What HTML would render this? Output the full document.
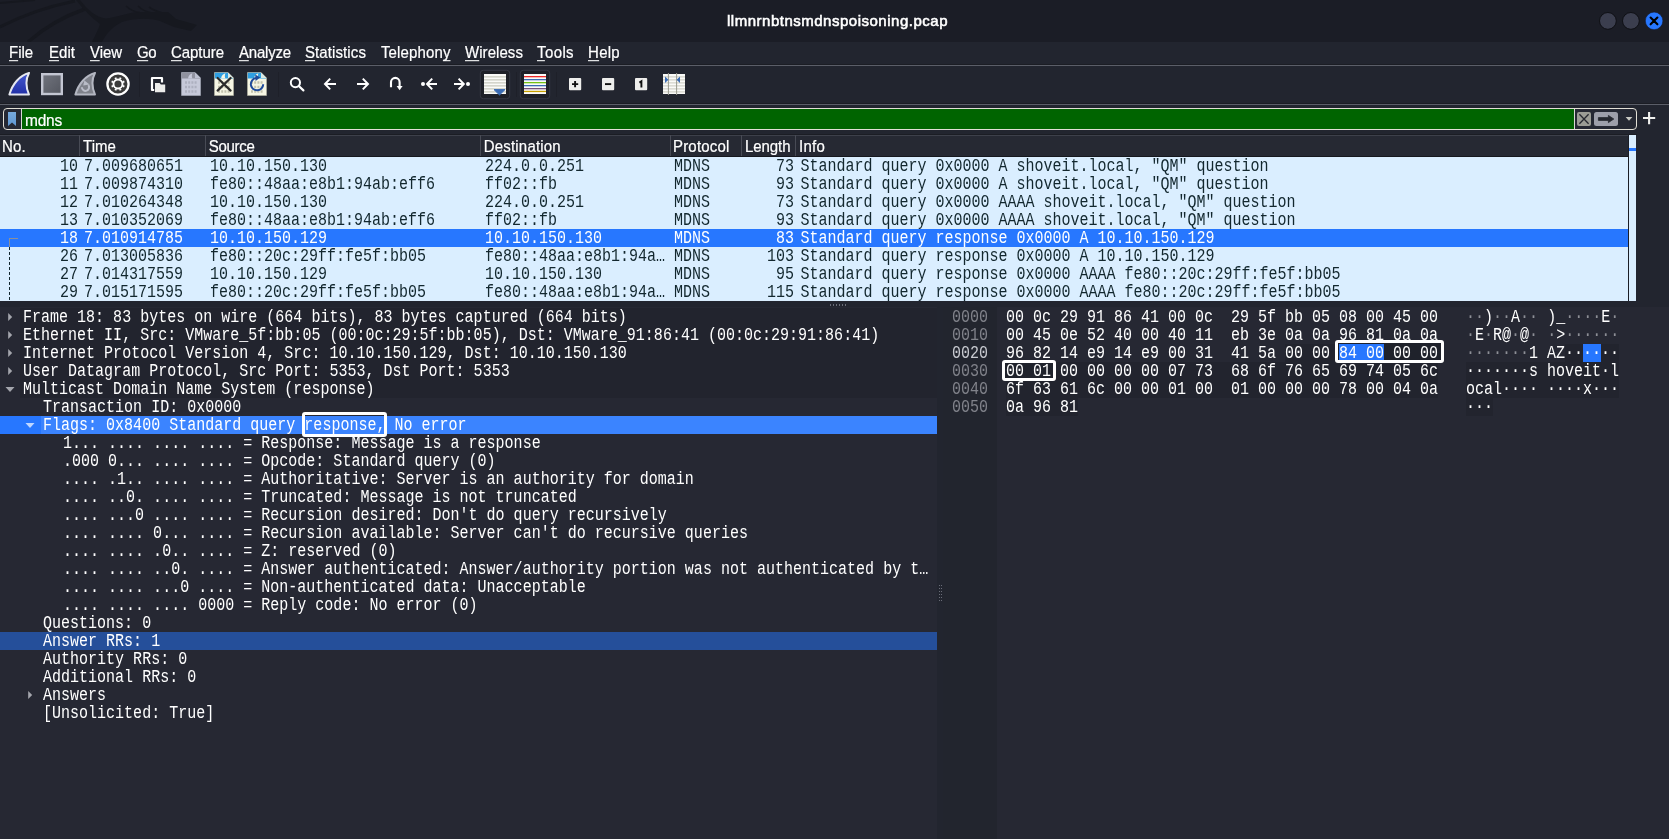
<!DOCTYPE html>
<html><head><meta charset="utf-8"><title>llmnrnbtnsmdnspoisoning.pcap</title>
<style>
html,body{margin:0;padding:0;}
body{width:1669px;height:839px;overflow:hidden;background:#22252f;position:relative;font-family:"Liberation Sans",sans-serif;color:#fff;}
div,span,svg{position:absolute;box-sizing:border-box;}
.m{font-family:"Liberation Mono",monospace;font-size:15px;line-height:18px;height:18px;white-space:pre;letter-spacing:0px;transform:scaleY(1.2);transform-origin:0 13px;}
.s{font-family:"Liberation Sans",sans-serif;white-space:pre;transform:scaleY(1.07);transform-origin:0 15px;-webkit-text-stroke:0.2px currentColor;}
.mi{top:43px;height:20px;line-height:20px;font-size:15px;}
.mi u{text-decoration:underline;text-underline-offset:2px;text-decoration-thickness:1px;text-decoration-skip-ink:none;}
.ch{top:137.3px;height:19px;line-height:19px;font-size:15px;color:#fff;}
.pr{left:0;width:1628px;height:18px;background:#daeeff;color:#12272e;}
.pr.sel{background:#2777ff;color:#fff;}
.pr span{top:1.5px;}
.dr{left:0;width:937px;height:18px;}
.dr span{top:1.5px;letter-spacing:0.011px;}
.dot{color:#8d8f96;}
</style></head><body><div id="root" style="left:0;top:0;width:1669px;height:839px;will-change:transform;">

<div style="left:0;top:0;width:1669px;height:42px;background:#1b1d26"></div>
<svg style="left:0;top:0" width="210" height="42" viewBox="0 0 210 42"><g fill="none" stroke="#16181f" stroke-linecap="butt">
<path d="M0 27 C25 14 50 6 75 1" stroke-width="3"/>
<path d="M28 42 C45 27 65 16 85 9" stroke-width="3.5"/>
<path d="M0 3 C12 2 24 1 35 0" stroke-width="2"/>
<path d="M126 6 C130 10 134 12 140 12.5 M138 6 C142 10 146 12 152 13 M149 7 C153 10 158 12 164 13.5" stroke-width="1.6"/>
<path d="M80 0 C88 10 95 17 106 18.5 C120 17 128 12 140 12 C155 12 165 12 168 12 L176 19 L197 25 L191 31 L174 27 L160 21 C150 18 135 18 122 22 C112 27 106 34 102 42 L92 42 C96 34 99 28 100 24 C92 18 84 10 76 0 Z" fill="#16181f" stroke="none"/>
</g></svg>
<div class="s" id="ttl" style="letter-spacing:0.507px;left:727px;top:11px;height:20px;line-height:20px;font-size:15px;font-weight:400;-webkit-text-stroke:0.55px #fff;transform:scaleY(1.03);">llmnrnbtnsmdnspoisoning.pcap</div>
<svg style="left:1589px;top:0" width="80" height="42" viewBox="1589 0 80 42"><circle cx="1607.9" cy="20.9" r="8.4" fill="#3b3e4e" stroke="#0e0f14" stroke-width="1"/><circle cx="1630.9" cy="20.9" r="8.4" fill="#3b3e4e" stroke="#0e0f14" stroke-width="1"/><circle cx="1654.1" cy="20.9" r="8.8" fill="#2777ff" stroke="#15192a" stroke-width="0.6"/><path d="M1650.6 17.6 L1657.4 24.3 M1657.4 17.6 L1650.6 24.3" stroke="#000" stroke-width="2.1" stroke-linecap="round"/></svg>
<div class="s mi" id="m_File" style="letter-spacing:-0.047px;left:9px"><u>F</u>ile</div>
<div class="s mi" id="m_Edit" style="letter-spacing:0.035px;left:49px"><u>E</u>dit</div>
<div class="s mi" id="m_View" style="letter-spacing:-0.062px;left:90px"><u>V</u>iew</div>
<div class="s mi" id="m_Go" style="letter-spacing:-0.508px;left:137px"><u>G</u>o</div>
<div class="s mi" id="m_Capture" style="letter-spacing:-0.056px;left:171px"><u>C</u>apture</div>
<div class="s mi" id="m_Analyze" style="letter-spacing:-0.196px;left:239px"><u>A</u>nalyze</div>
<div class="s mi" id="m_Statistics" style="letter-spacing:0.097px;left:305px"><u>S</u>tatistics</div>
<div class="s mi" id="m_Telephony" style="letter-spacing:0.123px;left:381px">Telephon<u>y</u></div>
<div class="s mi" id="m_Wireless" style="letter-spacing:0.059px;left:465px"><u>W</u>ireless</div>
<div class="s mi" id="m_Tools" style="letter-spacing:0.394px;left:537px"><u>T</u>ools</div>
<div class="s mi" id="m_Help" style="letter-spacing:0.281px;left:588px"><u>H</u>elp</div>
<div style="left:0;top:64px;width:1669px;height:1px;background:#1b1d24"></div>
<div style="left:0;top:65px;width:1669px;height:1px;background:#5b5e68"></div>
<div style="left:0;top:103px;width:1669px;height:1px;background:#1b1d24"></div>
<div style="left:0;top:104px;width:1669px;height:1px;background:#5b5e68"></div>
<div style="left:0;top:134px;width:1637px;height:1px;background:#1b1d24"></div>
<svg style="left:0;top:66px" width="700" height="38" viewBox="0 66 700 38">
<defs>
<linearGradient id="gb" x1="0" y1="0" x2="0" y2="1"><stop offset="0" stop-color="#4458d0"/><stop offset="1" stop-color="#2230a6"/></linearGradient>
<linearGradient id="gs" x1="0" y1="0" x2="1" y2="1"><stop offset="0" stop-color="#71747e"/><stop offset="1" stop-color="#53565f"/></linearGradient>
</defs>
<path d="M29 73 C19.6 75.4 12.4 84 9.4 94.6 L29 94.6 C26.2 88 25.2 80 29 73 Z" fill="url(#gb)" stroke="#e6e8f0" stroke-width="2" stroke-linejoin="round"/>
<rect x="42.2" y="74.2" width="19.6" height="19.8" fill="url(#gs)" stroke="#c3c6d2" stroke-width="2.4"/>
<g transform="translate(66 0)"><path d="M29 73 C19.6 75.4 12.4 84 9.4 94.6 L29 94.6 C26.2 88 25.2 80 29 73 Z" fill="#7f828b" stroke="#b4b7c2" stroke-width="2" stroke-linejoin="round"/><path d="M15.9 87.2 A3.6 3.6 0 1 0 22.3 85" fill="none" stroke="#b9bcc7" stroke-width="2"/><path d="M18.4 80.4 L23.6 84.6 L17.2 85.4 Z" fill="#b9bcc7"/></g>
<circle cx="118" cy="84" r="10.6" fill="#3a3a3a" stroke="#fff" stroke-width="2.3"/>
<circle cx="118" cy="84" r="4.5" fill="none" stroke="#fff" stroke-width="1.9"/>
<path d="M122.80 85.99 L124.37 86.64 M119.99 88.80 L120.64 90.37 M116.01 88.80 L115.36 90.37 M113.20 85.99 L111.63 86.64 M113.20 82.01 L111.63 81.36 M116.01 79.20 L115.36 77.63 M119.99 79.20 L120.64 77.63 M122.80 82.01 L124.37 81.36" stroke="#fff" stroke-width="1.9" fill="none"/>
<rect x="139" y="72" width="1" height="25" fill="#1e2029"/>
<rect x="278" y="72" width="1" height="25" fill="#1e2029"/>
<rect x="516" y="72" width="1" height="25" fill="#1e2029"/>
<rect x="556" y="72" width="1" height="25" fill="#1e2029"/>
<path d="M156 90 L152 90 L152 78 L162 78 L162 82.5" fill="none" stroke="#fff" stroke-width="2.2" stroke-linejoin="round"/>
<path d="M155 83 L159.6 83 L160.8 84.4 L165.2 84.4 L165.2 92.2 L155 92.2 Z" fill="#ececea" stroke="#22252f" stroke-width="1.6" paint-order="stroke"/>
<g transform="translate(181 0)">
<path d="M0.5 72.5 L14 72.5 L19.5 78 L19.5 95.5 L0.5 95.5 Z" fill="#c6c9d9" stroke="#a9acbb" stroke-width="0.6"/>
<path d="M0.8 72.8 L13.8 72.8 L19.2 78.2 L19.2 78.4 L0.8 78.4 Z" fill="#90929f"/>
<path d="M7 78.4 C7.5 75.5 9 74 11.5 73.2 C10.6 75 10.7 76.8 11.4 78.4 Z" fill="#c6c9d9"/>
<path d="M14 72.5 L14 78 L19.5 78 Z" fill="#c6c9d9" opacity="0.85"/>
<path d="M4 82.5 h12" stroke="#a9acbb" stroke-width="2.4" stroke-dasharray="2 1.2" opacity="0.85"/>
<path d="M4 87 h12" stroke="#a9acbb" stroke-width="2.4" stroke-dasharray="2 1.2" opacity="0.85"/>
<path d="M4 91.5 h12" stroke="#a9acbb" stroke-width="2.4" stroke-dasharray="2 1.2" opacity="0.85"/>

</g>
<g transform="translate(214 0)">
<path d="M0.5 72.5 L14 72.5 L19.5 78 L19.5 95.5 L0.5 95.5 Z" fill="#f6f6e4" stroke="#b9b9a4" stroke-width="0.6"/>
<path d="M0.8 72.8 L13.8 72.8 L19.2 78.2 L19.2 78.4 L0.8 78.4 Z" fill="#2f9fe2"/>
<path d="M7 78.4 C7.5 75.5 9 74 11.5 73.2 C10.6 75 10.7 76.8 11.4 78.4 Z" fill="#f6f6e4"/>
<path d="M14 72.5 L14 78 L19.5 78 Z" fill="#f6f6e4" opacity="0.85"/>
<path d="M4 82.5 h12" stroke="#b9b9a4" stroke-width="2.4" stroke-dasharray="2 1.2" opacity="0.85"/>
<path d="M4 87 h12" stroke="#b9b9a4" stroke-width="2.4" stroke-dasharray="2 1.2" opacity="0.85"/>
<path d="M4 91.5 h12" stroke="#b9b9a4" stroke-width="2.4" stroke-dasharray="2 1.2" opacity="0.85"/>
<path d="M3.6 78 L16.6 90.6 M16.6 78 L3.6 90.6" stroke="#2b2b2b" stroke-width="2.2" stroke-linecap="round"/>
</g>
<g transform="translate(247 0)">
<path d="M0.5 72.5 L14 72.5 L19.5 78 L19.5 95.5 L0.5 95.5 Z" fill="#f6f6e4" stroke="#b9b9a4" stroke-width="0.6"/>
<path d="M0.8 72.8 L13.8 72.8 L19.2 78.2 L19.2 78.4 L0.8 78.4 Z" fill="#2f9fe2"/>
<path d="M7 78.4 C7.5 75.5 9 74 11.5 73.2 C10.6 75 10.7 76.8 11.4 78.4 Z" fill="#f6f6e4"/>
<path d="M14 72.5 L14 78 L19.5 78 Z" fill="#f6f6e4" opacity="0.85"/>
<path d="M4 82.5 h12" stroke="#b9b9a4" stroke-width="2.4" stroke-dasharray="2 1.2" opacity="0.85"/>
<path d="M4 87 h12" stroke="#b9b9a4" stroke-width="2.4" stroke-dasharray="2 1.2" opacity="0.85"/>
<path d="M4 91.5 h12" stroke="#b9b9a4" stroke-width="2.4" stroke-dasharray="2 1.2" opacity="0.85"/>
<path d="M9.2 78 A6.2 6.2 0 1 0 16.2 84.2" fill="none" stroke="#1f4b9b" stroke-width="2"/><path d="M8.2 74.6 L13.2 77.6 L8.6 81 Z" fill="#1f4b9b"/>
</g>
<circle cx="295.4" cy="82.6" r="4.6" fill="none" stroke="#fff" stroke-width="2"/><path d="M298.8 86 L303.4 90.4" stroke="#fff" stroke-width="2.2" stroke-linecap="round"/>
<path d="M336 84 L325.2 84 M330.2 78.6 L325.0 84 L330.2 89.4" fill="none" stroke="#fff" stroke-width="2" stroke-linecap="butt" stroke-linejoin="miter"/>
<path d="M357 84 L367.8 84 M362.8 78.6 L368.0 84 L362.8 89.4" fill="none" stroke="#fff" stroke-width="2" stroke-linecap="butt" stroke-linejoin="miter"/>
<path d="M391 87.2 L391 82.2 A4.3 4.3 0 0 1 399.6 82.2 L399.6 87" fill="none" stroke="#fff" stroke-width="2.1"/><path d="M396.6 86 L402.6 86 L399.6 90.2 Z" fill="#fff"/>
<circle cx="423" cy="84" r="2" fill="#fff"/>
<path d="M437 84 L427.2 84 M432.2 78.6 L427.0 84 L432.2 89.4" fill="none" stroke="#fff" stroke-width="2" stroke-linecap="butt" stroke-linejoin="miter"/>
<path d="M454 84 L463.6 84 M458.6 78.6 L463.8 84 L458.6 89.4" fill="none" stroke="#fff" stroke-width="2" stroke-linecap="butt" stroke-linejoin="miter"/>
<circle cx="468" cy="84" r="2" fill="#fff"/>
<rect x="480.3" y="70.3" width="29.4" height="28.4" rx="3" fill="#1e2028" stroke="#353844" stroke-width="1"/>
<rect x="520.3" y="70.3" width="29.4" height="28.4" rx="3" fill="#1e2028" stroke="#353844" stroke-width="1"/>
<rect x="484" y="74" width="22" height="20" fill="#fafaf8"/>
<rect x="484" y="76.4" width="22" height="1" fill="#bcbdb0"/>
<rect x="484" y="79.4" width="22" height="1" fill="#bcbdb0"/>
<rect x="484" y="82.4" width="22" height="1" fill="#bcbdb0"/>
<rect x="484" y="85.4" width="22" height="1" fill="#bcbdb0"/>
<rect x="484" y="88.4" width="22" height="1" fill="#bcbdb0"/>
<rect x="484" y="91.4" width="22" height="1" fill="#bcbdb0"/>
<path d="M494 89.6 L505 89.6 L499.5 95 Z" fill="#3b6cb4" stroke="#3b6cb4" stroke-width="1" stroke-linejoin="round"/>
<rect x="524" y="74" width="22" height="20" fill="#fafaf8"/>
<rect x="524" y="76" width="22" height="1.3" fill="#ef2929"/>
<rect x="524" y="79" width="22" height="1.3" fill="#3a6ab5"/>
<rect x="524" y="82" width="22" height="1.3" fill="#73c216"/>
<rect x="524" y="85" width="22" height="1.3" fill="#3a6ab5"/>
<rect x="524" y="88" width="22" height="1.3" fill="#75507b"/>
<rect x="524" y="90.8" width="22" height="1.3" fill="#c8a000"/>
<rect x="569" y="78" width="12.2" height="12.2" rx="1" fill="#eeeeec"/>
<rect x="602" y="78" width="12.2" height="12.2" rx="1" fill="#eeeeec"/>
<rect x="635" y="78" width="12.2" height="12.2" rx="1" fill="#eeeeec"/>
<path d="M572 84.1 h6.2 M575.1 81 v6.2" stroke="#111" stroke-width="1.9"/>
<path d="M605 84.1 h6.2" stroke="#111" stroke-width="1.9"/>
<path d="M639.4 82.6 L641.4 81.2 L641.4 87.4" stroke="#111" stroke-width="1.9" fill="none"/>
<rect x="663" y="74" width="22" height="20" fill="#fafaf8"/>
<rect x="663" y="76.4" width="22" height="1" fill="#c8c9bd"/>
<rect x="663" y="79.4" width="22" height="1" fill="#c8c9bd"/>
<rect x="663" y="82.4" width="22" height="1" fill="#c8c9bd"/>
<rect x="663" y="85.4" width="22" height="1" fill="#c8c9bd"/>
<rect x="663" y="88.4" width="22" height="1" fill="#c8c9bd"/>
<rect x="663" y="91.4" width="22" height="1" fill="#c8c9bd"/>
<rect x="667.9" y="73" width="1" height="22" fill="#9a9b90"/><rect x="676.1" y="73" width="1" height="22" fill="#9a9b90"/>
<path d="M665 76.6 L668.4 79.8 L665 83 Z M680 76.6 L676.6 79.8 L680 83 Z" fill="#3b6cb4"/>
</svg>
<div style="left:3px;top:108px;width:1634px;height:22px;border:1px solid #e2dfd6;border-radius:4px;background:#252833;overflow:hidden"><div style="left:17px;top:0;width:1px;height:20px;background:#d9d9d6"></div><div style="left:18px;top:0;width:1552px;height:20px;background:#006400"></div><div style="left:1570px;top:0;width:1px;height:20px;background:#d9d9d6"></div></div>
<svg style="left:8px;top:112px" width="8" height="14" viewBox="0 0 8 14"><defs><linearGradient id="bk" x1="0" y1="0" x2="0" y2="1"><stop offset="0" stop-color="#76a9dc"/><stop offset="1" stop-color="#5f97d2"/></linearGradient></defs><path d="M0 0 L8 0 L8 14 L4 10.6 L0 14 Z" fill="url(#bk)"/></svg>
<div class="s" id="f_mdns" style="letter-spacing:-0.227px;left:25px;top:111.2px;height:20px;line-height:20px;font-size:15.5px;color:#fff">mdns</div>
<svg style="left:1576px;top:111px" width="62" height="16" viewBox="1576 111 62 16"><rect x="1577" y="112" width="14" height="14" rx="2" fill="#9b9c95"/><path d="M1579.4 114.2 L1588.6 123.8 M1588.6 114.2 L1579.4 123.8" stroke="#262830" stroke-width="1.3"/><rect x="1594" y="112" width="24" height="14" rx="2.5" fill="#9d9faa"/><path d="M1598.4 117.6 L1608.4 117.6 L1608.4 115.4 L1613.8 119 L1608.4 122.6 L1608.4 120.4 L1598.4 120.4 Z" fill="#262830" stroke="#262830" stroke-width="0.8" stroke-linejoin="round"/><path d="M1625.6 117 L1632.4 117 L1629 120.8 Z" fill="#cacac4"/></svg>
<svg style="left:1641px;top:110px" width="16" height="16" viewBox="0 0 16 16"><path d="M2 8 H14.2 M8.1 2 V14.2" stroke="#f0f0ee" stroke-width="2.1"/></svg>
<div style="left:0;top:135px;width:1628px;height:1px;background:#3d404a"></div>
<div style="left:0;top:136px;width:1628px;height:20px;background:#262933"></div>
<div style="left:0;top:156px;width:1628px;height:1px;background:#16181e"></div>
<div class="s ch" id="c_No" style="letter-spacing:0.219px;left:2px">No.</div>
<div class="s ch" id="c_Time" style="letter-spacing:0.055px;left:83px">Time</div>
<div class="s ch" id="c_Source" style="letter-spacing:-0.255px;left:208.7px">Source</div>
<div class="s ch" id="c_Destination" style="letter-spacing:0.178px;left:483.8px">Destination</div>
<div class="s ch" id="c_Protocol" style="letter-spacing:0.184px;left:673px">Protocol</div>
<div class="s ch" id="c_Length" style="letter-spacing:-0.065px;left:745px">Length</div>
<div class="s ch" id="c_Info" style="letter-spacing:0.242px;left:799px">Info</div>
<div style="left:79px;top:135px;width:1px;height:21px;background:#484b55"></div>
<div style="left:205px;top:135px;width:1px;height:21px;background:#484b55"></div>
<div style="left:480px;top:135px;width:1px;height:21px;background:#484b55"></div>
<div style="left:670px;top:135px;width:1px;height:21px;background:#484b55"></div>
<div style="left:741px;top:135px;width:1px;height:21px;background:#484b55"></div>
<div style="left:795px;top:135px;width:1px;height:21px;background:#484b55"></div>
<div class="pr" style="top:157px"><span class="m" style="left:0;width:78px;text-align:right">10</span><span class="m" style="left:84px">7.009680651</span><span class="m" style="left:210px">10.10.150.130</span><span class="m" style="left:485px">224.0.0.251</span><span class="m" style="left:674px">MDNS</span><span class="m" style="left:700px;width:94px;text-align:right">73</span><span class="m" style="left:800.5px">Standard query 0x0000 A shoveit.local, "QM" question</span></div>
<div class="pr" style="top:175px"><span class="m" style="left:0;width:78px;text-align:right">11</span><span class="m" style="left:84px">7.009874310</span><span class="m" style="left:210px">fe80::48aa:e8b1:94ab:eff6</span><span class="m" style="left:485px">ff02::fb</span><span class="m" style="left:674px">MDNS</span><span class="m" style="left:700px;width:94px;text-align:right">93</span><span class="m" style="left:800.5px">Standard query 0x0000 A shoveit.local, "QM" question</span></div>
<div class="pr" style="top:193px"><span class="m" style="left:0;width:78px;text-align:right">12</span><span class="m" style="left:84px">7.010264348</span><span class="m" style="left:210px">10.10.150.130</span><span class="m" style="left:485px">224.0.0.251</span><span class="m" style="left:674px">MDNS</span><span class="m" style="left:700px;width:94px;text-align:right">73</span><span class="m" style="left:800.5px">Standard query 0x0000 AAAA shoveit.local, "QM" question</span></div>
<div class="pr" style="top:211px"><span class="m" style="left:0;width:78px;text-align:right">13</span><span class="m" style="left:84px">7.010352069</span><span class="m" style="left:210px">fe80::48aa:e8b1:94ab:eff6</span><span class="m" style="left:485px">ff02::fb</span><span class="m" style="left:674px">MDNS</span><span class="m" style="left:700px;width:94px;text-align:right">93</span><span class="m" style="left:800.5px">Standard query 0x0000 AAAA shoveit.local, "QM" question</span></div>
<div class="pr sel" style="top:229px"><span class="m" style="left:0;width:78px;text-align:right">18</span><span class="m" style="left:84px">7.010914785</span><span class="m" style="left:210px">10.10.150.129</span><span class="m" style="left:485px">10.10.150.130</span><span class="m" style="left:674px">MDNS</span><span class="m" style="left:700px;width:94px;text-align:right">83</span><span class="m" style="left:800.5px">Standard query response 0x0000 A 10.10.150.129</span></div>
<div class="pr" style="top:247px"><span class="m" style="left:0;width:78px;text-align:right">26</span><span class="m" style="left:84px">7.013005836</span><span class="m" style="left:210px">fe80::20c:29ff:fe5f:bb05</span><span class="m" style="left:485px">fe80::48aa:e8b1:94a…</span><span class="m" style="left:674px">MDNS</span><span class="m" style="left:700px;width:94px;text-align:right">103</span><span class="m" style="left:800.5px">Standard query response 0x0000 A 10.10.150.129</span></div>
<div class="pr" style="top:265px"><span class="m" style="left:0;width:78px;text-align:right">27</span><span class="m" style="left:84px">7.014317559</span><span class="m" style="left:210px">10.10.150.129</span><span class="m" style="left:485px">10.10.150.130</span><span class="m" style="left:674px">MDNS</span><span class="m" style="left:700px;width:94px;text-align:right">95</span><span class="m" style="left:800.5px">Standard query response 0x0000 AAAA fe80::20c:29ff:fe5f:bb05</span></div>
<div class="pr" style="top:283px"><span class="m" style="left:0;width:78px;text-align:right">29</span><span class="m" style="left:84px">7.015171595</span><span class="m" style="left:210px">fe80::20c:29ff:fe5f:bb05</span><span class="m" style="left:485px">fe80::48aa:e8b1:94a…</span><span class="m" style="left:674px">MDNS</span><span class="m" style="left:700px;width:94px;text-align:right">115</span><span class="m" style="left:800.5px">Standard query response 0x0000 AAAA fe80::20c:29ff:fe5f:bb05</span></div>
<div style="left:9px;top:238px;width:9px;height:1px;background:#8c9098"></div>
<div style="left:9px;top:238px;width:1px;height:9px;background:#8c9098"></div>
<div style="left:9px;top:247px;width:1px;height:54px;background:repeating-linear-gradient(#12272e 0 3px,transparent 3px 5px)"></div>
<div style="left:1628px;top:135px;width:1px;height:166px;background:#1b1d25"></div>
<div style="left:1629px;top:135px;width:7px;height:166px;background:#daeeff"></div>
<div style="left:1629px;top:148px;width:7px;height:3px;background:#2777ff"></div>
<div style="left:0;top:301px;width:1669px;height:6px;background:#22252f"></div>
<div style="left:0;top:307px;width:937px;height:532px;background:#262833"></div>
<div class="dr" style="top:308px;">
<div style="left:20px;top:0;width:917px;height:18px;background:#22242e"></div>
<svg style="left:6px;top:4px" width="8" height="10" viewBox="0 0 8 10"><path d="M2.2 1 L6.2 5 L2.2 9 Z" fill="#a4a6ad"/></svg>
<span class="m" style="left:23px">Frame 18: 83 bytes on wire (664 bits), 83 bytes captured (664 bits)</span></div>
<div class="dr" style="top:326px;">
<div style="left:20px;top:0;width:917px;height:18px;background:#22242e"></div>
<svg style="left:6px;top:4px" width="8" height="10" viewBox="0 0 8 10"><path d="M2.2 1 L6.2 5 L2.2 9 Z" fill="#a4a6ad"/></svg>
<span class="m" style="left:23px">Ethernet II, Src: VMware_5f:bb:05 (00:0c:29:5f:bb:05), Dst: VMware_91:86:41 (00:0c:29:91:86:41)</span></div>
<div class="dr" style="top:344px;">
<div style="left:20px;top:0;width:917px;height:18px;background:#22242e"></div>
<svg style="left:6px;top:4px" width="8" height="10" viewBox="0 0 8 10"><path d="M2.2 1 L6.2 5 L2.2 9 Z" fill="#a4a6ad"/></svg>
<span class="m" style="left:23px">Internet Protocol Version 4, Src: 10.10.150.129, Dst: 10.10.150.130</span></div>
<div class="dr" style="top:362px;">
<div style="left:20px;top:0;width:917px;height:18px;background:#22242e"></div>
<svg style="left:6px;top:4px" width="8" height="10" viewBox="0 0 8 10"><path d="M2.2 1 L6.2 5 L2.2 9 Z" fill="#a4a6ad"/></svg>
<span class="m" style="left:23px">User Datagram Protocol, Src Port: 5353, Dst Port: 5353</span></div>
<div class="dr" style="top:380px;">
<div style="left:20px;top:0;width:917px;height:18px;background:#22242e"></div>
<svg style="left:5px;top:6px" width="10" height="7" viewBox="0 0 10 7"><path d="M0.5 1 L9.5 1 L5 6 Z" fill="#a4a6ad"/></svg>
<span class="m" style="left:23px">Multicast Domain Name System (response)</span></div>
<div class="dr" style="top:398px;">
<span class="m" style="left:43px">Transaction ID: 0x0000</span></div>
<div class="dr" style="top:416px;background:#2777ff;">
<div style="left:41px;top:0;width:896px;height:18px;background:#3b84ff"></div>
<svg style="left:25px;top:6px" width="10" height="7" viewBox="0 0 10 7"><path d="M0.5 1 L9.5 1 L5 6 Z" fill="#bfd6ff"/></svg>
<span class="m" style="left:43px">Flags: 0x8400 Standard query response, No error</span></div>
<div class="dr" style="top:434px;">
<span class="m" style="left:63px">1... .... .... .... = Response: Message is a response</span></div>
<div class="dr" style="top:452px;">
<span class="m" style="left:63px">.000 0... .... .... = Opcode: Standard query (0)</span></div>
<div class="dr" style="top:470px;">
<span class="m" style="left:63px">.... .1.. .... .... = Authoritative: Server is an authority for domain</span></div>
<div class="dr" style="top:488px;">
<span class="m" style="left:63px">.... ..0. .... .... = Truncated: Message is not truncated</span></div>
<div class="dr" style="top:506px;">
<span class="m" style="left:63px">.... ...0 .... .... = Recursion desired: Don't do query recursively</span></div>
<div class="dr" style="top:524px;">
<span class="m" style="left:63px">.... .... 0... .... = Recursion available: Server can't do recursive queries</span></div>
<div class="dr" style="top:542px;">
<span class="m" style="left:63px">.... .... .0.. .... = Z: reserved (0)</span></div>
<div class="dr" style="top:560px;">
<span class="m" style="left:63px">.... .... ..0. .... = Answer authenticated: Answer/authority portion was not authenticated by t…</span></div>
<div class="dr" style="top:578px;">
<span class="m" style="left:63px">.... .... ...0 .... = Non-authenticated data: Unacceptable</span></div>
<div class="dr" style="top:596px;">
<span class="m" style="left:63px">.... .... .... 0000 = Reply code: No error (0)</span></div>
<div class="dr" style="top:614px;">
<span class="m" style="left:43px">Questions: 0</span></div>
<div class="dr" style="top:632px;background:#254f9a;">
<span class="m" style="left:43px">Answer RRs: 1</span></div>
<div class="dr" style="top:650px;">
<span class="m" style="left:43px">Authority RRs: 0</span></div>
<div class="dr" style="top:668px;">
<span class="m" style="left:43px">Additional RRs: 0</span></div>
<div class="dr" style="top:686px;">
<svg style="left:26px;top:4px" width="8" height="10" viewBox="0 0 8 10"><path d="M2.2 1 L6.2 5 L2.2 9 Z" fill="#a4a6ad"/></svg>
<span class="m" style="left:43px">Answers</span></div>
<div class="dr" style="top:704px;">
<span class="m" style="left:43px">[Unsolicited: True]</span></div>
<div style="left:302px;top:412px;width:85px;height:25px;border:3px solid #fff;border-radius:3px"></div>
<div style="left:937px;top:307px;width:6px;height:532px;background:#22252f"></div>
<div style="left:943px;top:307px;width:726px;height:532px;background:#262833"></div>
<div style="left:943px;top:307px;width:54px;height:532px;background:#22252e"></div>
<div style="left:939px;top:585px;width:1px;height:17px;background:repeating-linear-gradient(#6a6d78 0 1px,transparent 1px 3px)"></div>
<div style="left:941px;top:585px;width:1px;height:17px;background:repeating-linear-gradient(#6a6d78 0 1px,transparent 1px 3px)"></div>
<div style="left:830px;top:304px;width:17px;height:2px;background:repeating-linear-gradient(90deg,#6a6d78 0 1px,transparent 1px 3px)"></div>
<div style="left:1285px;top:344px;width:153px;height:18px;background:#22242e"></div>
<div style="left:1565px;top:344px;width:54px;height:18px;background:#22242e"></div>
<div style="left:1006px;top:362px;width:432px;height:18px;background:#22242e"></div>
<div style="left:1466px;top:362px;width:153px;height:18px;background:#22242e"></div>
<div style="left:1006px;top:380px;width:432px;height:18px;background:#22242e"></div>
<div style="left:1466px;top:380px;width:153px;height:18px;background:#22242e"></div>
<div style="left:1006px;top:398px;width:72px;height:18px;background:#22242e"></div>
<div style="left:1466px;top:398px;width:27px;height:18px;background:#22242e"></div>
<div style="left:1335px;top:340px;width:109px;height:23px;border:3.4px solid #fff;border-radius:3px;background:#1f222b"></div>
<div style="left:1002px;top:360px;width:54px;height:21px;border:3px solid #fff;border-radius:3px;background:#1f222b"></div>
<div style="left:1339px;top:344px;width:45px;height:16px;background:#2777ff"></div>
<div style="left:1583px;top:344px;width:18px;height:18px;background:#2777ff"></div>
<span class="m" style="left:952px;top:309.5px;color:#80828a">0000</span>
<span class="m" style="left:1006px;top:309.5px">00 0c 29 91 86 41 00 0c  29 5f bb 05 08 00 45 00</span>
<span class="m" style="left:1466px;top:309.5px"><span class="dot" style="position:static">·</span><span class="dot" style="position:static">·</span>)<span class="dot" style="position:static">·</span><span class="dot" style="position:static">·</span>A<span class="dot" style="position:static">·</span><span class="dot" style="position:static">·</span> )_<span class="dot" style="position:static">·</span><span class="dot" style="position:static">·</span><span class="dot" style="position:static">·</span><span class="dot" style="position:static">·</span>E<span class="dot" style="position:static">·</span></span>
<span class="m" style="left:952px;top:327.5px;color:#80828a">0010</span>
<span class="m" style="left:1006px;top:327.5px">00 45 0e 52 40 00 40 11  eb 3e 0a 0a 96 81 0a 0a</span>
<span class="m" style="left:1466px;top:327.5px"><span class="dot" style="position:static">·</span>E<span class="dot" style="position:static">·</span>R@<span class="dot" style="position:static">·</span>@<span class="dot" style="position:static">·</span> <span class="dot" style="position:static">·</span>&gt;<span class="dot" style="position:static">·</span><span class="dot" style="position:static">·</span><span class="dot" style="position:static">·</span><span class="dot" style="position:static">·</span><span class="dot" style="position:static">·</span><span class="dot" style="position:static">·</span></span>
<span class="m" style="left:952px;top:345.5px;color:#c8cad0">0020</span>
<span class="m" style="left:1006px;top:345.5px">96 82 14 e9 14 e9 00 31  41 5a 00 00 84 00 00 00</span>
<span class="m" style="left:1466px;top:345.5px"><span class="dot" style="position:static">·</span><span class="dot" style="position:static">·</span><span class="dot" style="position:static">·</span><span class="dot" style="position:static">·</span><span class="dot" style="position:static">·</span><span class="dot" style="position:static">·</span><span class="dot" style="position:static">·</span>1 AZ······</span>
<span class="m" style="left:952px;top:363.5px;color:#80828a">0030</span>
<span class="m" style="left:1006px;top:363.5px">00 01 00 00 00 00 07 73  68 6f 76 65 69 74 05 6c</span>
<span class="m" style="left:1466px;top:363.5px">·······s hoveit·l</span>
<span class="m" style="left:952px;top:381.5px;color:#80828a">0040</span>
<span class="m" style="left:1006px;top:381.5px">6f 63 61 6c 00 00 01 00  01 00 00 00 78 00 04 0a</span>
<span class="m" style="left:1466px;top:381.5px">ocal···· ····x···</span>
<span class="m" style="left:952px;top:399.5px;color:#80828a">0050</span>
<span class="m" style="left:1006px;top:399.5px">0a 96 81</span>
<span class="m" style="left:1466px;top:399.5px">···</span>
</div></body></html>
